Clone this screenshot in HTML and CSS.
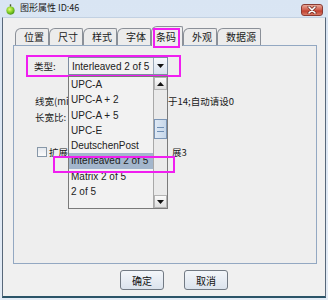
FILE: index.html
```html
<!DOCTYPE html>
<html>
<head>
  <title>图形属性</title>
  <link rel="stylesheet" href="styles.css">
</head>
<body>
<div class="window">
  <div class="titlebar">
    <svg class="app-icon" width="9" height="11" viewBox="0 0 9 11">
      <defs>
        <radialGradient id="ball" cx="0.4" cy="0.35" r="0.7">
          <stop offset="0" stop-color="#e6f77a"/>
          <stop offset="0.5" stop-color="#8bd42a"/>
          <stop offset="1" stop-color="#3f8e14"/>
        </radialGradient>
      </defs>
      <rect x="3.8" y="0.3" width="1.4" height="2.4" fill="#4a5a2a"/>
      <circle cx="4.5" cy="6.6" r="4.1" fill="url(#ball)"/>
    </svg>
    <span class="title">图形属性 ID:46</span>
    <div class="close-btn">
      <svg width="10" height="8" viewBox="0 0 10 8">
        <path d="M2 1 L8 7 M8 1 L2 7" stroke="#6b2a22" stroke-width="3" stroke-linecap="round"/>
        <path d="M2 1 L8 7 M8 1 L2 7" stroke="#ffffff" stroke-width="1.6" stroke-linecap="round"/>
      </svg>
    </div>
  </div>

  <div class="client">
    <div class="tabs">
      <div class="tab">位置</div>
      <div class="tab">尺寸</div>
      <div class="tab">样式</div>
      <div class="tab">字体</div>
      <div class="tab selected">条码</div>
      <div class="tab">外观</div>
      <div class="tab">数据源</div>
    </div>

    <div class="panel">
      <div class="type-row">
        <span class="label type-label">类型:</span>
        <div class="combo">
          <span class="combo-text">Interleaved 2 of 5</span>
          <div class="combo-arrow">
            <svg width="7" height="4" viewBox="0 0 7 4"><path d="M0 0 L7 0 L3.5 4 Z" fill="#111"/></svg>
          </div>
          <div class="popup">
            <ul class="list">
              <li>UPC-A</li>
              <li>UPC-A + 2</li>
              <li>UPC-A + 5</li>
              <li>UPC-E</li>
              <li>DeutschenPost</li>
              <li class="current">Interleaved 2 of 5</li>
              <li>Matrix 2 of 5</li>
              <li>2 of 5</li>
            </ul>
            <div class="scrollbar">
              <div class="sb-btn">
                <svg width="7" height="4" viewBox="0 0 7 4"><path d="M0 4 L7 4 L3.5 0 Z" fill="#111"/></svg>
              </div>
              <div class="sb-track">
                <div class="sb-thumb"><span class="grip"></span></div>
              </div>
              <div class="sb-btn">
                <svg width="7" height="4" viewBox="0 0 7 4"><path d="M0 0 L7 0 L3.5 4 Z" fill="#111"/></svg>
              </div>
            </div>
          </div>
        </div>
      </div>

      <div class="row first-row">
        <span class="label width-label">线宽(mil</span>
        <span class="note">于14;自动请设0</span>
      </div>
      <div class="row">
        <span class="label">长宽比:</span>
      </div>
      <div class="row check-row">
        <span class="checkbox"></span>
        <span class="cb-label">扩展</span>
        <span class="note">展3</span>
      </div>

      <div class="mark"></div>
    </div>

    <div class="buttons">
      <button class="btn">确定</button>
      <button class="btn">取消</button>
    </div>
  </div>
</div>
</body>
</html>
```

FILE: styles.css
```css
body {
  margin: 0;
  background: #e6eef7;
  font-family: "Noto Sans CJK SC", sans-serif;
  color: #1a1a1a;
}

.window {
  width: 328px;
  height: 300px;
  display: flex;
  flex-direction: column;
  background: linear-gradient(#d9e5f3, #e4ecf6);
}

.titlebar {
  height: 17px;
  display: flex;
  align-items: center;
  padding-left: 6px;
}
.app-icon {
  margin-right: 5px;
  margin-top: 2px;
}
.title {
  font-size: 9px;
  line-height: 12px;
  margin-top: -1px;
}
.close-btn {
  margin-left: auto;
  margin-right: 5px;
  align-self: flex-start;
  margin-top: 4px;
  width: 22px;
  height: 12px;
  box-sizing: border-box;
  border: 1px solid #8a3b33;
  border-radius: 3px;
  background: linear-gradient(#e8a898, #cf5a4a 50%, #c0402f 60%, #d97a66);
  display: flex;
  align-items: center;
  justify-content: center;
}

.client {
  flex: 1;
  margin: 0 2px 2px 2px;
  border: 1px solid #58687a;
  border-top-color: #c2d1e2;
  border-bottom: 2px solid #2b5468;
  background: #f0f0f0;
  display: flex;
  flex-direction: column;
}

.tabs {
  display: flex;
  align-items: flex-end;
  margin: 10px 0 0 12px;
  height: 17px;
  position: relative;
  z-index: 1;
}
.tab {
  font-size: 10px;
  line-height: 16px;
  height: 16px;
  padding: 0 4px 0 8px;
  border: 1px solid #8b9098;
  border-bottom: none;
  border-radius: 6px 2px 0 0;
  background: #ececec;
  white-space: nowrap;
}
.tab.selected {
  position: relative;
  height: 19px;
  line-height: 19px;
  padding: 0 6px 0 4px;
  background: #eeeeee;
  margin-bottom: -1px;
}
.tab.selected::after {
  content: "";
  position: absolute;
  left: 1px;
  top: 1px;
  width: 27px;
  height: 20px;
  box-sizing: border-box;
  border: 2px solid #f01ef0;
}

.panel {
  position: relative;
  margin-left: 10px;
  width: 304px;
  height: 219px;
  box-sizing: border-box;
  border: 1px solid #93a8c2;
  background: #eeeeee;
}

.type-row {
  margin: 9px 0 0 12px;
  width: 155px;
  height: 22px;
  box-sizing: border-box;
  border: 2px solid #f01ef0;
  padding-left: 6px;
  display: flex;
  align-items: center;
}
.label {
  font-size: 9.5px;
  line-height: 16px;
}
.type-label {
  width: 34px;
}

.combo {
  position: relative;
  width: 100px;
  height: 18px;
  box-sizing: border-box;
  border: 1px solid #7d8ca0;
  background: #f3f3f3;
  display: flex;
  align-items: center;
}
.combo-text {
  flex: 1;
  padding-left: 3px;
  font-family: "Liberation Sans", sans-serif;
  font-size: 10px;
}
.combo-arrow {
  width: 13px;
  height: 16px;
  border-left: 1px solid #9aa8b8;
  background: linear-gradient(#f7f9fc, #d8e2ee);
  display: flex;
  align-items: center;
  justify-content: center;
}

.popup {
  position: absolute;
  left: -1px;
  top: 18px;
  width: 100px;
  height: 133px;
  box-sizing: border-box;
  border: 1px solid #7a7a7a;
  background: #f2f2f2;
  display: flex;
  z-index: 5;
}
.list {
  flex: 1;
  list-style: none;
  margin: 0;
  padding: 0;
  font-family: "Liberation Sans", sans-serif;
  font-size: 10px;
  color: #222;
}
.list li {
  height: 15.3px;
  line-height: 15.3px;
  padding-left: 2px;
  white-space: nowrap;
}
.list li.current {
  background: #a3b6cc;
}

.scrollbar {
  width: 13px;
  border-left: 1px solid #a8a8a8;
  background: #eaeaea;
  display: flex;
  flex-direction: column;
}
.sb-btn {
  height: 13px;
  box-sizing: border-box;
  border: 1px solid #b4b4b4;
  background: linear-gradient(#fbfbfb, #dedede);
  display: flex;
  align-items: center;
  justify-content: center;
}
.sb-track {
  flex: 1;
}
.sb-thumb {
  margin-top: 29px;
  height: 20px;
  box-sizing: border-box;
  border: 1px solid #7b95b6;
  background: linear-gradient(90deg, #dfe9f5, #c6d7ea);
  display: flex;
  align-items: center;
  justify-content: center;
}
.grip {
  width: 7px;
  height: 3px;
  border-top: 1px solid #6f8fb5;
  border-bottom: 1px solid #6f8fb5;
}

.row {
  display: flex;
  align-items: center;
  height: 16px;
  padding-left: 21px;
  font-size: 9.5px;
}
.first-row {
  margin-top: 16px;
}
.width-label {
  width: 133px;
  white-space: nowrap;
}
.note {
  font-size: 9.5px;
}
.check-row {
  margin-top: 19px;
  padding-left: 23px;
}
.checkbox {
  width: 10px;
  height: 10px;
  box-sizing: border-box;
  border: 1px solid #8797a8;
  background: linear-gradient(#e4e8ee, #fbfbfb);
}
.cb-label {
  margin-left: 2px;
  width: 123px;
  white-space: nowrap;
}

.mark {
  position: absolute;
  left: 39px;
  top: 110px;
  width: 122px;
  height: 17px;
  box-sizing: border-box;
  border: 2px solid #f01ef0;
  z-index: 6;
}

.buttons {
  display: flex;
  gap: 20px;
  margin-top: 6px;
  padding-left: 117px;
}
.btn {
  width: 44px;
  height: 20px;
  padding: 0;
  border: 1px solid #727a84;
  border-radius: 3px;
  background: linear-gradient(#f3f6fa, #dbe3ed);
  font-family: "Noto Sans CJK SC", sans-serif;
  font-size: 10px;
  color: #111;
}
```
